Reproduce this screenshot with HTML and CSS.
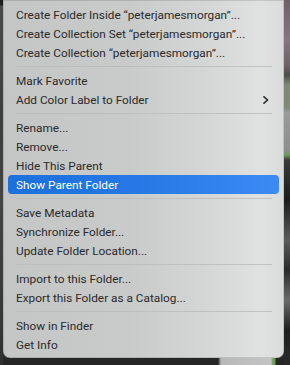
FILE: index.html
```html
<!DOCTYPE html>
<html>
<head>
<meta charset="utf-8">
<link rel="stylesheet" href="styles.css">
</head>
<body>
<div class="screen">
  <div class="strip-left"></div>
  <div class="menu">
    <div class="item">Create Folder Inside “peterjamesmorgan”...</div>
    <div class="item">Create Collection Set “peterjamesmorgan”...</div>
    <div class="item">Create Collection “peterjamesmorgan”...</div>
    <div class="sep"></div>
    <div class="item">Mark Favorite</div>
    <div class="item has-sub">Add Color Label to Folder
      <svg class="chev" width="6" height="8" viewBox="0 0 6 8"><polyline points="1,0.8 4.6,4 1,7.2" fill="none" stroke="#2a2a2a" stroke-width="1.6" stroke-linecap="round" stroke-linejoin="round"/></svg>
    </div>
    <div class="sep"></div>
    <div class="item">Rename...</div>
    <div class="item">Remove...</div>
    <div class="item">Hide This Parent</div>
    <div class="item active">Show Parent Folder</div>
    <div class="sep"></div>
    <div class="item">Save Metadata</div>
    <div class="item">Synchronize Folder...</div>
    <div class="item">Update Folder Location...</div>
    <div class="sep"></div>
    <div class="item">Import to this Folder...</div>
    <div class="item">Export this Folder as a Catalog...</div>
    <div class="sep"></div>
    <div class="item">Show in Finder</div>
    <div class="item">Get Info</div>
  </div>
  <div class="strip-right"></div>
  <div class="strip-bottom"></div>
</div>
</body>
</html>
```
FILE: styles.css
```css
html, body {
  margin: 0;
  padding: 0;
}
body {
  background: #2b2b2b;
  width: 290px;
  height: 365px;
  overflow: hidden;
}
.screen {
  display: grid;
  grid-template-columns: 3px 281px 6px;
  grid-template-rows: auto 1fr;
  height: 365px;
}
.strip-left {
  grid-column: 1;
  grid-row: 1 / 3;
  background: linear-gradient(to bottom, #1e1e1e 0px, #1e1e1e 5px, #4a4a4a 6px, #3e3e3e 120px, #444 200px, #3a3a3a 300px, #303030 365px);
}
.strip-right {
  grid-column: 3;
  grid-row: 1 / 3;
  background: linear-gradient(to bottom,
    #6f6068 0px, #857680 40px, #6d6368 65px, #4d4d4d 75px,
    #7d8a74 85px, #808a78 108px, #9a9a9a 112px, #8e8e8e 150px,
    #6f9a5c 155px, #3a3a3a 160px, #1c1c1c 200px, #5a5a5a 240px,
    #2a2a2a 270px, #6a6a6a 300px, #1e1e1e 330px, #2a2a2a 365px);
}
.strip-bottom {
  grid-column: 2;
  grid-row: 2;
  background: linear-gradient(to right, #262626 0px, #262626 215px, #b8b8b8 218px, #c4c4c4 268px, #6aa04e 270px, #6aa04e 272px, #262626 273px);
}
.menu {
  grid-column: 2;
  grid-row: 1;
  box-sizing: border-box;
  height: 358px;
  padding: 5px 0 0 0;
  background: linear-gradient(to right, #c4c5c5 0%, #c9caca 45%, #d6d8d8 75%, #e0e2e2 92%, #dadcdc 100%);
  border-radius: 0 0 7px 7px;
  box-shadow: inset 0 0 0 0.5px rgba(0,0,0,0.25);
  font-family: "Roboto", "Liberation Sans", sans-serif;
  font-size: 11.8px;
  color: #2a2a2a;
  display: flex;
  flex-direction: column;
}
.item {
  box-sizing: border-box;
  height: 19px;
  line-height: 18px;
  padding: 1px 8px 0 8px;
  margin: 0 5px;
  border-radius: 4px;
  white-space: nowrap;
  display: flex;
  align-items: center;
}
.has-sub {
  justify-content: space-between;
}
.chev {
  margin-right: 2px;
  flex: none;
}
.active {
  background: linear-gradient(to right, #1b70dc 0%, #2679e6 50%, #3c8af4 100%);
  color: #ffffff;
}
.sep {
  height: 1px;
  margin: 4px 12px 4px 13px;
  background: #b9baba;
  opacity: 0.8;
}
```
